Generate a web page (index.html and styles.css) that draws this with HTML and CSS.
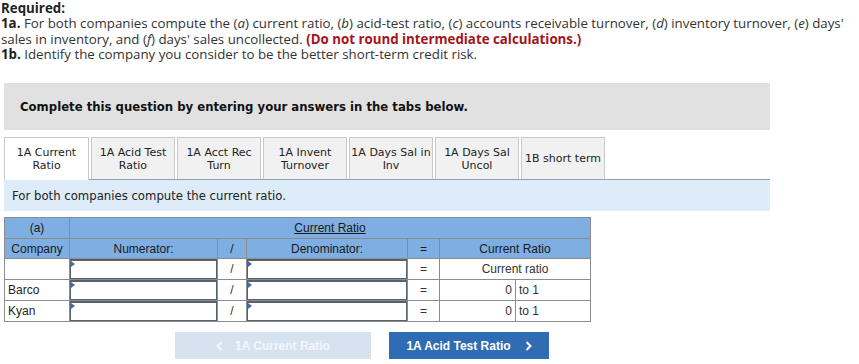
FILE: index.html
```html
<!DOCTYPE html>
<html>
<head>
<meta charset="utf-8">
<link rel="stylesheet" href="styles.css">
</head>
<body>
<div class="req">
  <p class="req-title">Required:</p>
  <p><b>1a.</b> For both companies compute the (<i>a</i>) current ratio, (<i>b</i>) acid-test ratio, (<i>c</i>) accounts receivable turnover, (<i>d</i>) inventory turnover, (<i>e</i>) days' sales in inventory, and (<i>f</i>) days' sales uncollected. <b class="red">(Do not round intermediate calculations.)</b></p>
  <p><b>1b.</b> Identify the company you consider to be the better short-term credit risk.</p>
</div>

<div class="wrap">
  <div class="instr">Complete this question by entering your answers in the tabs below.</div>

  <div class="tabs">
    <div class="tab active">1A Current<br>Ratio</div>
    <div class="tab">1A Acid Test<br>Ratio</div>
    <div class="tab">1A Acct Rec<br>Turn</div>
    <div class="tab">1A Invent<br>Turnover</div>
    <div class="tab">1A Days Sal in<br>Inv</div>
    <div class="tab">1A Days Sal<br>Uncol</div>
    <div class="tab">1B short term</div>
  </div>

  <div class="panel">For both companies compute the current ratio.</div>

  <table class="grid">
    <tr class="h1">
      <th class="c-co">(a)</th>
      <th colspan="6"><u>Current Ratio</u></th>
    </tr>
    <tr class="h2">
      <th>Company</th>
      <th class="c-num">Numerator:</th>
      <th class="c-sl">/</th>
      <th class="c-den">Denominator:</th>
      <th class="c-eq">=</th>
      <th colspan="2">Current Ratio</th>
    </tr>
    <tr>
      <td class="name"></td>
      <td class="inp"><div class="box"><span class="tri"></span></div></td>
      <td class="sym">/</td>
      <td class="inp"><div class="box"><span class="tri"></span></div></td>
      <td class="sym">=</td>
      <td colspan="2" class="center">Current ratio</td>
    </tr>
    <tr>
      <td class="name">Barco</td>
      <td class="inp"><div class="box"><span class="tri"></span></div></td>
      <td class="sym">/</td>
      <td class="inp"><div class="box"><span class="tri"></span></div></td>
      <td class="sym">=</td>
      <td class="val">0</td>
      <td class="to">to 1</td>
    </tr>
    <tr>
      <td class="name">Kyan</td>
      <td class="inp"><div class="box"><span class="tri"></span></div></td>
      <td class="sym">/</td>
      <td class="inp"><div class="box"><span class="tri"></span></div></td>
      <td class="sym">=</td>
      <td class="val">0</td>
      <td class="to">to 1</td>
    </tr>
  </table>

  <div class="nav">
    <div class="btn prev"><svg class="chev l" width="7" height="10" viewBox="0 0 7 10"><polyline points="5.5,1 1.5,5 5.5,9" fill="none" stroke="#f3f6fa" stroke-width="2"/></svg>1A Current Ratio</div>
    <div class="btn next">1A Acid Test Ratio<svg class="chev r" width="7" height="10" viewBox="0 0 7 10"><polyline points="1.5,1 5.5,5 1.5,9" fill="none" stroke="#ffffff" stroke-width="2"/></svg></div>
  </div>
</div>
</body>
</html>
```

FILE: styles.css
```css
html, body {
  margin: 0;
  padding: 0;
  background: #ffffff;
}

.req {
  padding: 1px 0 0 1px;
  height: 61px;
  font-family: "Open Sans", Lato, sans-serif;
  font-size: 13.3px;
  line-height: 15.3px;
  color: #333333;
}
.req p { margin: 0; }
.req b { color: #222; }
.req .red { color: #a3151a; }
.req-title { font-weight: bold; color: #222; }

.wrap {
  margin-left: 4px;
  width: 766px;
}

.instr {
  margin-top: 21px;
  height: 47px;
  background: #e1e1e1;
  padding-left: 16px;
  display: flex;
  align-items: center;
  font-family: "DejaVu Sans", Verdana, sans-serif;
  font-weight: bold;
  font-size: 11.7px;
  color: #111;
}

.tabs {
  margin-top: 7px;
  display: flex;
  gap: 2px;
  align-items: stretch;
}
.tab {
  width: 84px;
  height: 42px;
  box-sizing: border-box;
  border: 1px solid #c9c9c9;
  border-bottom: none;
  background: #f1f1f1;
  font-family: "DejaVu Sans", Verdana, sans-serif;
  font-size: 11px;
  line-height: 13px;
  color: #222;
  display: flex;
  align-items: center;
  justify-content: center;
  text-align: center;
}
.tab.active {
  width: 85px;
  background: #ffffff;
  height: 43px;
  margin-bottom: -1px;
  position: relative;
}

.panel {
  height: 31px;
  border-top: 1px solid #8ea3b5;
  background: #ddecf8;
  padding-left: 8px;
  display: flex;
  align-items: center;
  font-family: "DejaVu Sans", Verdana, sans-serif;
  font-size: 11.7px;
  color: #222;
}

.grid {
  margin-top: 6px;
  border-collapse: collapse;
  font-family: "Liberation Sans", Arial, sans-serif;
  font-size: 12px;
  color: #222;
}
.grid th, .grid td {
  border: 1px solid #8c8c8c;
  padding: 0;
}
.grid th {
  background: #7eaee2;
  font-weight: normal;
  color: #1a1a1a;
  text-align: center;
}
.grid .h1 th { height: 20px; }
.grid .h2 th { height: 19px; }
.grid td { height: 20px; }
.c-co { width: 64px; }
.c-num { width: 147px; }
.c-sl { width: 28px; }
.c-den { width: 160px; }
.c-eq { width: 31px; }
.grid td.name { padding-left: 3px; width: 61px; }
.grid td.sym { text-align: center; color: #333; }
.grid td.center { text-align: center; color: #333; }
.grid td.val { text-align: right; padding-right: 3px; width: 72px; color: #333; }
.grid td.to { padding-left: 3px; width: 71px; color: #333; }
.grid td.inp { padding: 0; }
.box {
  position: relative;
  height: 17px;
  border: 1px solid #56636f;
  border-top-width: 2px;
  background: #ffffff;
}
.tri {
  position: absolute;
  left: 0;
  top: 0;
  width: 0;
  height: 0;
  border-top: 3px solid transparent;
  border-bottom: 3px solid transparent;
  border-left: 4px solid #3f6fa8;
}

.nav {
  margin-top: 10px;
  padding-left: 171px;
  display: flex;
  gap: 18px;
  font-family: "Liberation Sans", Arial, sans-serif;
  font-size: 12px;
  font-weight: bold;
}
.btn {
  height: 27px;
  display: flex;
  align-items: center;
  justify-content: center;
  color: #ffffff;
}
.btn.prev {
  width: 196px;
  background: #d6e2f0;
  color: #f3f6fa;
}
.btn.next {
  width: 160px;
  background: #2f6cb4;
}
.chev.l { margin-right: 12px; }
.chev.r { margin-left: 14px; }
```
